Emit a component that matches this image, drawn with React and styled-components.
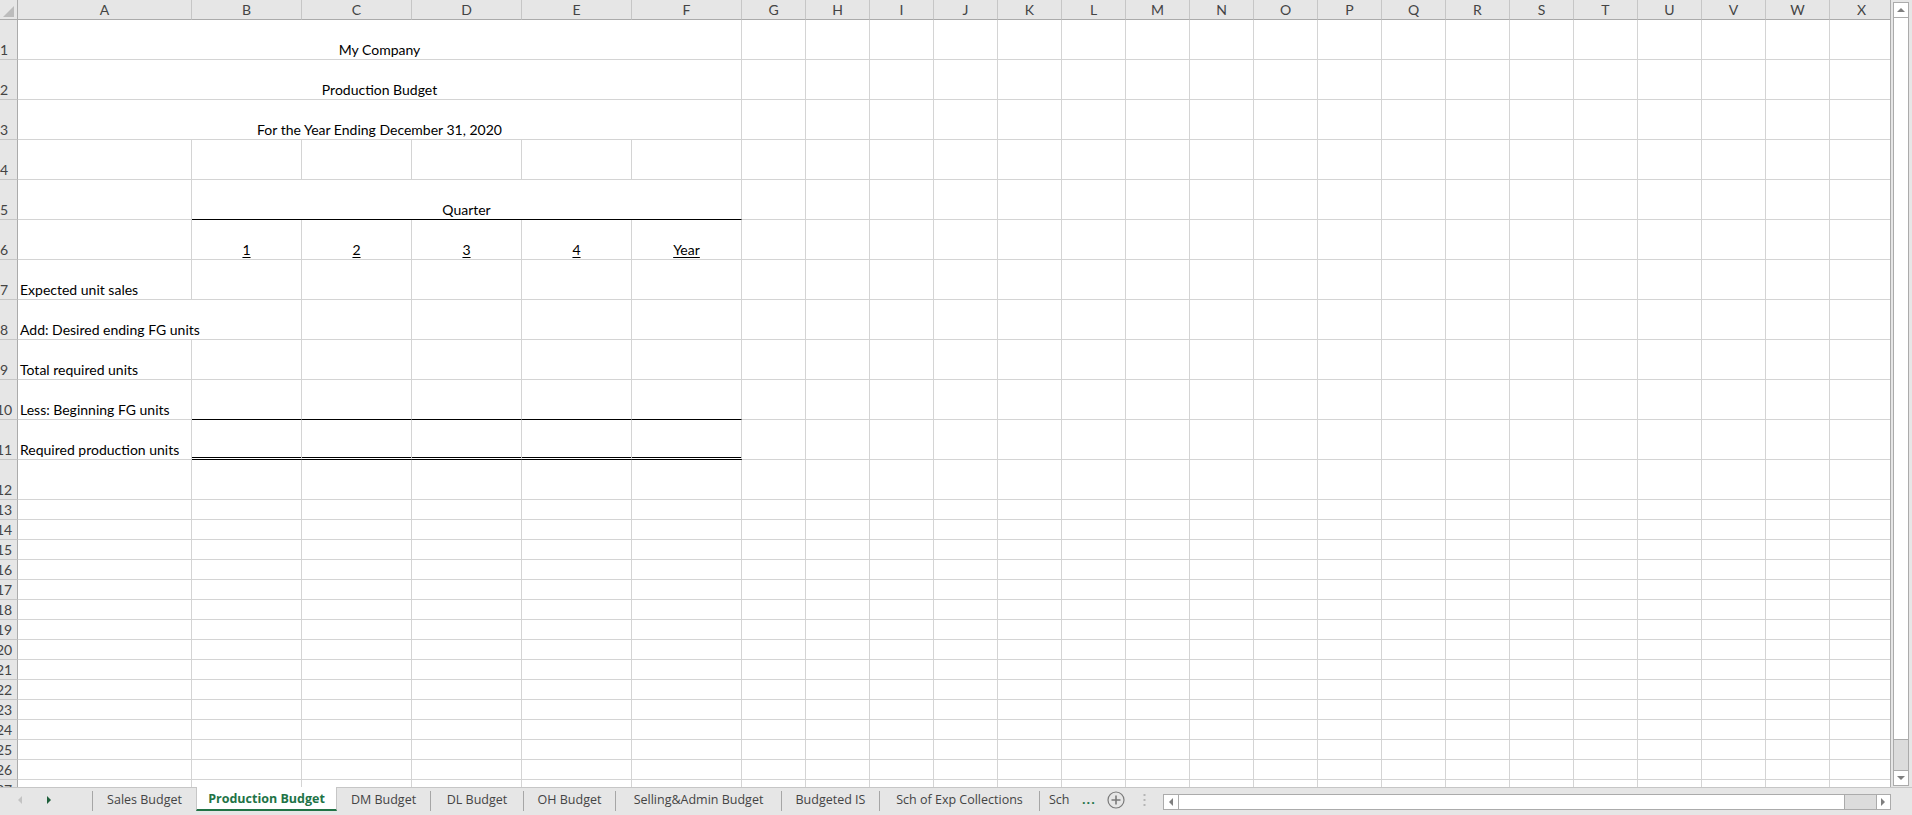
import React from 'react'
import styled, { createGlobalStyle } from 'styled-components'

const CELL_FONT = `"Lato", "Liberation Sans", sans-serif`
const UI_FONT = `"Open Sans", "Noto Sans", sans-serif`
const GREEN = '#217346'

const GlobalStyle = createGlobalStyle`
  html, body {
    margin: 0;
    padding: 0;
    overflow: hidden;
    background: #e6e6e6;
  }
  * { box-sizing: border-box; }
`

const COLUMNS = 'ABCDEFGHIJKLMNOPQRSTUVWX'.split('')

// row contents, columns not listed are left blank
const ROWS = [
  { n: 1, cells: [{ span: 6, text: 'My Company', align: 'center' }] },
  { n: 2, cells: [{ span: 6, text: 'Production Budget', align: 'center' }] },
  { n: 3, cells: [{ span: 6, text: 'For the Year Ending December 31, 2020', align: 'center' }] },
  { n: 4, cells: [] },
  { n: 5, cells: [{}, { span: 5, text: 'Quarter', align: 'center', rule: 'single' }] },
  {
    n: 6,
    cells: [{}, ...['1', '2', '3', '4', 'Year'].map((t) => ({ text: t, align: 'center', underline: true }))],
  },
  { n: 7, cells: [{ text: 'Expected unit sales' }] },
  { n: 8, cells: [{ span: 2, text: 'Add: Desired ending FG units' }] },
  { n: 9, cells: [{ text: 'Total required units' }] },
  { n: 10, cells: [{ text: 'Less: Beginning FG units' }, ...Array(5).fill({ rule: 'single' })] },
  { n: 11, cells: [{ text: 'Required production units' }, ...Array(5).fill({ rule: 'double' })] },
  ...Array.from({ length: 16 }, (_, i) => ({ n: 12 + i, cells: [] })),
]

const SHEETS = [
  { name: 'Sales Budget', w: 103 },
  { name: 'Production Budget', w: 141, active: true },
  { name: 'DM Budget', w: 93 },
  { name: 'DL Budget', w: 92 },
  { name: 'OH Budget', w: 91 },
  { name: 'Selling&Admin Budget', w: 165 },
  { name: 'Budgeted IS', w: 97 },
  { name: 'Sch of Exp Collections', w: 159 },
  { name: 'Sch', w: 36, cut: true },
]

const Page = styled.div`
  width: 1912px;
  height: 815px;
  display: flex;
  flex-direction: column;
  background: #e6e6e6;
  overflow: hidden;
`

const Workspace = styled.div`
  display: flex;
  height: 787px;
`

const Viewport = styled.div`
  width: 1891px;
  height: 787px;
  overflow: hidden;
  background: #fff;
  border-right: 1px solid #ababab;
`

const Grid = styled.div`
  display: grid;
  grid-template-columns: 18px 174px repeat(5, 110px) repeat(18, 64px);
  grid-template-rows: 20px repeat(12, 40px) repeat(15, 20px);
  font-family: ${CELL_FONT};
  font-size: 14px;
  color: #000;
`

const Corner = styled.div`
  background: #e6e6e6;
  border-right: 1px solid #ababab;
  border-bottom: 1px solid #ababab;
  display: flex;
  align-items: flex-end;
  justify-content: flex-end;
  padding: 0 3px 2px 0;
`

const ColHeader = styled.div`
  background: #e6e6e6;
  border-right: 1px solid #c6c6c6;
  border-bottom: 1px solid #ababab;
  display: flex;
  align-items: center;
  justify-content: center;
  color: #444;
  font-size: 14px;
  line-height: 1;
  padding-top: 1px;
`

const RowHeader = styled.div`
  background: #e6e6e6;
  border-right: 1px solid #ababab;
  border-bottom: 1px solid #c6c6c6;
  overflow: hidden;
  display: flex;
  align-items: flex-end;
  color: #444;
  line-height: 16px;
  padding-bottom: 1px;
`

const RowNum = styled.span`
  display: block;
  flex: none;
  width: 28px;
  margin-left: -10px;
  text-align: center;
`

const RULES = {
  single: '1px solid #000',
  double: '3px double #000',
}

const Cell = styled.div`
  grid-column: span ${(p) => p.$span};
  border-right: 1px solid #d4d4d4;
  border-bottom: ${(p) => RULES[p.$rule] || '1px solid #d4d4d4'};
  display: flex;
  align-items: flex-end;
  justify-content: ${(p) => (p.$align === 'center' ? 'center' : 'flex-start')};
  padding: 0 2px ${(p) => (p.$rule === 'double' ? 0 : 1)}px;
  line-height: 16px;
  white-space: nowrap;
  overflow: hidden;
`

const Underlined = styled.span`
  text-decoration: underline;
  text-underline-offset: 2px;
  text-decoration-thickness: 1px;
`

const VScrollArea = styled.div`
  width: 21px;
  padding: 2px 3px 1px 2px;
  display: flex;
`

const VTrack = styled.div`
  flex: 1;
  border: 1px solid #ababab;
  background: #dcdcdc;
  display: flex;
  flex-direction: column;
`

const ArrowBox = styled.div`
  flex: none;
  width: ${(p) => p.$w || 'auto'};
  height: ${(p) => p.$h || 'auto'};
  background: #fff;
  display: flex;
  align-items: center;
  justify-content: center;
`

const VThumb = styled.div`
  flex: 1;
  background: #fff;
  border-top: 1px solid #ababab;
  border-bottom: 1px solid #ababab;
  margin-bottom: 30px;
`

const TabBar = styled.div`
  height: 28px;
  border-top: 1px solid #c6c6c6;
  display: flex;
  align-items: flex-start;
  font-family: ${UI_FONT};
  font-size: 12.5px;
  color: #444;
`

const NavArea = styled.div`
  width: 92px;
  height: 23px;
  display: flex;
  align-items: center;
  padding-left: 18px;
  gap: 25px;
`

const Divider = styled.div`
  width: 1px;
  height: 20px;
  margin-top: 3px;
  background: #a6a6a6;
  flex: none;
`

const Tab = styled.div`
  flex: none;
  width: ${(p) => p.$w}px;
  height: 23px;
  display: flex;
  align-items: center;
  justify-content: ${(p) => (p.$cut ? 'flex-start' : 'center')};
  padding-left: ${(p) => (p.$cut ? 9 : 0)}px;
  white-space: nowrap;
  background: ${(p) => (p.$active ? '#fff' : 'transparent')};
  color: ${(p) => (p.$active ? GREEN : '#444')};
  font-weight: ${(p) => (p.$active ? 700 : 400)};
  border-left: ${(p) => (p.$active ? '1px solid #c6c6c6' : 'none')};
  border-right: ${(p) => (p.$active ? '1px solid #c6c6c6' : 'none')};
  border-bottom: ${(p) => (p.$active ? `2px solid ${GREEN}` : 'none')};
  margin-top: ${(p) => (p.$active ? -1 : 0)}px;
  height: ${(p) => (p.$active ? 24 : 23)}px;
`

const More = styled.div`
  height: 23px;
  display: flex;
  align-items: center;
  margin-left: 6px;
  color: ${GREEN};
  font-weight: 700;
  letter-spacing: 1px;
`

const AddSheet = styled.div`
  height: 23px;
  display: flex;
  align-items: center;
  margin-left: 11px;
`

const Grip = styled.div`
  height: 23px;
  display: flex;
  align-items: center;
  margin-left: 18px;
`

const HScroll = styled.div`
  margin: 6px 0 0 17px;
  width: 728px;
  height: 16px;
  border: 1px solid #ababab;
  background: #dcdcdc;
  display: flex;
`

const HThumb = styled.div`
  width: 667px;
  background: #fff;
  border-left: 1px solid #ababab;
  border-right: 1px solid #ababab;
`

const Triangle = ({ dir, color = '#7f7f7f', size = 4 }) => {
  const s = size
  const pts = {
    up: `0,${s} ${s},0 ${2 * s},${s}`,
    down: `0,0 ${2 * s},0 ${s},${s}`,
    left: `${s},0 ${s},${2 * s} 0,${s}`,
    right: `0,0 ${s},${s} 0,${2 * s}`,
  }[dir]
  const vertical = dir === 'up' || dir === 'down'
  return (
    <svg width={vertical ? 2 * s : s} height={vertical ? s : 2 * s}>
      <polygon points={pts} fill={color} />
    </svg>
  )
}

function SheetGrid() {
  return (
    <Grid>
      <Corner>
        <svg width="11" height="11">
          <polygon points="0,11 11,11 11,0" fill="#bcbcbc" />
        </svg>
      </Corner>
      {COLUMNS.map((c) => (
        <ColHeader key={c}>{c}</ColHeader>
      ))}
      {ROWS.map((row) => {
        const used = row.cells.reduce((sum, c) => sum + (c.span || 1), 0)
        const cells = [...row.cells, ...Array(COLUMNS.length - used).fill({})]
        return (
          <React.Fragment key={row.n}>
            <RowHeader>
              <RowNum>{row.n}</RowNum>
            </RowHeader>
            {cells.map((c, i) => (
              <Cell key={i} $span={c.span || 1} $align={c.align} $rule={c.rule}>
                {c.underline ? <Underlined>{c.text}</Underlined> : c.text}
              </Cell>
            ))}
          </React.Fragment>
        )
      })}
    </Grid>
  )
}

function SheetTabs() {
  const items = []
  SHEETS.forEach((s, i) => {
    const prev = SHEETS[i - 1]
    if (i > 0 && !s.active && !prev.active) items.push(<Divider key={`d${i}`} />)
    items.push(
      <Tab key={s.name} $w={s.w} $active={s.active} $cut={s.cut}>
        {s.name}
      </Tab>
    )
  })
  return (
    <TabBar>
      <NavArea>
        <Triangle dir="left" color="#c3c3c3" />
        <Triangle dir="right" color="#1f5f3b" />
      </NavArea>
      <Divider />
      {items}
      <More>...</More>
      <AddSheet>
        <svg width="18" height="18" viewBox="0 0 18 18">
          <circle cx="9" cy="9" r="8" fill="none" stroke="#7a7a7a" strokeWidth="1.2" />
          <path d="M9 4.5v9M4.5 9h9" stroke="#7a7a7a" strokeWidth="1.6" />
        </svg>
      </AddSheet>
      <Grip>
        <svg width="3" height="12">
          <rect x="0.5" y="0" width="2" height="2" fill="#b5b5b5" />
          <rect x="0.5" y="5" width="2" height="2" fill="#b5b5b5" />
          <rect x="0.5" y="10" width="2" height="2" fill="#b5b5b5" />
        </svg>
      </Grip>
      <HScroll>
        <ArrowBox $w="14px">
          <Triangle dir="left" size={4} />
        </ArrowBox>
        <HThumb />
        <div style={{ flex: 1 }} />
        <ArrowBox $w="14px" style={{ borderLeft: '1px solid #ababab' }}>
          <Triangle dir="right" size={4} />
        </ArrowBox>
      </HScroll>
    </TabBar>
  )
}

export default function App() {
  return (
    <Page>
      <GlobalStyle />
      <Workspace>
        <Viewport>
          <SheetGrid />
        </Viewport>
        <VScrollArea>
          <VTrack>
            <ArrowBox $h="14px">
              <Triangle dir="up" size={4} />
            </ArrowBox>
            <VThumb />
            <ArrowBox $h="15px" style={{ borderTop: '1px solid #ababab' }}>
              <Triangle dir="down" size={4} />
            </ArrowBox>
          </VTrack>
        </VScrollArea>
      </Workspace>
      <SheetTabs />
    </Page>
  )
}
